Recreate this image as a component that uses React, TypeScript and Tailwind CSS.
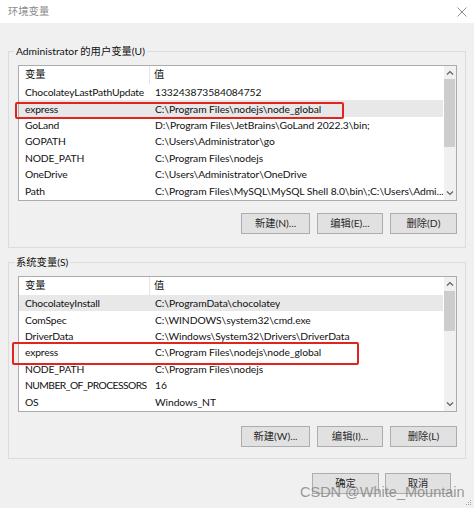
const FONT = 'Lato, "Noto Sans CJK SC", sans-serif';

type Row = [string, string];

const userVars: Row[] = [
  ['ChocolateyLastPathUpdate', '133243873584084752'],
  ['express', 'C:\\Program Files\\nodejs\\node_global'],
  ['GoLand', 'D:\\Program Files\\JetBrains\\GoLand 2022.3\\bin;'],
  ['GOPATH', 'C:\\Users\\Administrator\\go'],
  ['NODE_PATH', 'C:\\Program Files\\nodejs'],
  ['OneDrive', 'C:\\Users\\Administrator\\OneDrive'],
  ['Path', 'C:\\Program Files\\MySQL\\MySQL Shell 8.0\\bin\\;C:\\Users\\Admi...'],
];

const sysVars: Row[] = [
  ['ChocolateyInstall', 'C:\\ProgramData\\chocolatey'],
  ['ComSpec', 'C:\\WINDOWS\\system32\\cmd.exe'],
  ['DriverData', 'C:\\Windows\\System32\\Drivers\\DriverData'],
  ['express', 'C:\\Program Files\\nodejs\\node_global'],
  ['NODE_PATH', 'C:\\Program Files\\nodejs'],
  ['NUMBER_OF_PROCESSORS', '16'],
  ['OS', 'Windows_NT'],
];

function Chevron({ up }: { up?: boolean }) {
  return (
    <svg width="8" height="5" viewBox="0 0 8 5">
      <polyline
        points={up ? '1,4.5 4,1.5 7,4.5' : '1,0.5 4,3.5 7,0.5'}
        fill="none"
        stroke="#606060"
        strokeWidth="1.2"
      />
    </svg>
  );
}

interface VarListProps {
  rows: Row[];
  selected: number;
  thumbTop: number;
  thumbHeight: number;
  mark: { left: number; top: number; width: number; height: number };
}

function VarList({ rows, selected, thumbTop, thumbHeight, mark }: VarListProps) {
  return (
    <div className="relative flex h-[136px] w-[439px] border border-[#acacac] bg-white">
      {/* Columns */}
      <div className="flex w-[424px] shrink-0 flex-col overflow-hidden">
        <div className="flex h-[18px] items-center text-[10.3px] text-[#111]">
          <div className="flex h-full w-[131px] shrink-0 items-center border-r border-[#e5e5e5] pl-[6px]">变量</div>
          <div className="pl-[4px]">值</div>
        </div>
        {rows.map(([name, value], i) => (
          <div
            key={name}
            className={`flex h-[16.4px] items-center whitespace-nowrap text-[10.3px] leading-[16px] text-[#111] ${i === selected ? 'bg-[#e8e8e8]' : ''}`}
          >
            <div
              className={`w-[131px] shrink-0 overflow-hidden pl-[6px] ${name.length > 19 && name === name.toUpperCase() ? 'tracking-[-0.55px]' : 'tracking-[-0.15px]'}`}
            >
              {name}
            </div>
            <div className="min-w-0 overflow-hidden pl-[5px] tracking-[-0.06px]">{value}</div>
          </div>
        ))}
      </div>

      {/* Scrollbar */}
      <div className="relative ml-[1px] flex w-[12px] shrink-0 flex-col items-center justify-between bg-[#f0f0f0] py-[4px]">
        <Chevron up />
        <Chevron />
        <div
          className="absolute left-0 w-[11px] bg-[#cdcdcd]"
          style={{ top: thumbTop, height: thumbHeight }}
        />
      </div>

      {/* Red highlight */}
      <div
        className="absolute rounded-[2px] border-2 border-[#e3231d]"
        style={{ left: mark.left, top: mark.top, width: mark.width, height: mark.height }}
      />
    </div>
  );
}

function Button({ label, w = 'w-[67px]' }: { label: string; w?: string }) {
  return (
    <div
      className={`${w} flex h-[21px] items-center justify-center border border-[#adadad] bg-[#e1e1e1] text-[10.3px] text-[#2a2a2a]`}
    >
      {label}
    </div>
  );
}

export default function App() {
  return (
    <div className="relative h-[508px] w-[474px] overflow-hidden bg-[#f0f0f0]" style={{ fontFamily: FONT }}>
      {/* Title bar */}
      <div className="flex h-[23px] items-center justify-between bg-white pl-[8px] pr-[7px]">
        <span className="text-[10.3px] text-[#8c8c8c]">环境变量</span>
        <svg width="10" height="10" viewBox="0 0 10 10">
          <path d="M0.5 0.5 L9.5 9.5 M9.5 0.5 L0.5 9.5" stroke="#8c8c8c" strokeWidth="1" />
        </svg>
      </div>

      {/* User variables */}
      <fieldset className="mx-[8px] mt-[20px] border border-[#dcdcdc] pb-[13px] pl-[9px] pr-[8px] pt-[6px]">
        <legend className="-ml-[4px] px-[2px] text-[10.3px] leading-[16px] text-[#111]">
          Administrator 的用户变量(U)
        </legend>
        <VarList
          rows={userVars}
          selected={1}
          thumbTop={13}
          thumbHeight={68}
          mark={{ left: -4, top: 36, width: 329, height: 17 }}
        />
        <div className="mt-[12px] flex w-[439px] justify-end gap-[7px]">
          <Button label="新建(N)..." w="w-[69px]" />
          <Button label="编辑(E)..." w="w-[66px]" />
          <Button label="删除(D)" />
        </div>
      </fieldset>

      {/* System variables */}
      <fieldset className="mx-[8px] mt-[6px] border border-[#dcdcdc] pb-[11px] pl-[9px] pr-[8px] pt-[6px]">
        <legend className="-ml-[4px] px-[2px] text-[10.3px] leading-[16px] text-[#111]">系统变量(S)</legend>
        <VarList
          rows={sysVars}
          selected={0}
          thumbTop={14}
          thumbHeight={40}
          mark={{ left: -7, top: 65, width: 347, height: 23 }}
        />
        <div className="mt-[14px] flex w-[439px] justify-end gap-[7px]">
          <Button label="新建(W)..." w="w-[69px]" />
          <Button label="编辑(I)..." w="w-[66px]" />
          <Button label="删除(L)" />
        </div>
      </fieldset>

      {/* Dialog buttons */}
      <div className="mr-[23px] mt-[14px] flex justify-end gap-[6px]">
        <Button label="确定" w="w-[67px]" />
        <Button label="取消" w="w-[66px]" />
      </div>

      {/* Watermark */}
      <div
        className="absolute left-[300px] top-[484px] whitespace-nowrap text-[14.5px] leading-[17px] text-[rgba(135,135,135,0.85)]"
        style={{ fontFamily: '"Liberation Sans", Arial, sans-serif' }}
      >
        CSDN @White_Mountain
      </div>

      {/* Resize grip */}
      <svg className="absolute bottom-[2px] right-[2px]" width="8" height="8" viewBox="0 0 8 8">
        <rect x="6" y="2" width="1" height="1" fill="#a0a0a0" />
        <rect x="4" y="4" width="1" height="1" fill="#a0a0a0" />
        <rect x="6" y="4" width="1" height="1" fill="#a0a0a0" />
        <rect x="2" y="6" width="1" height="1" fill="#a0a0a0" />
        <rect x="4" y="6" width="1" height="1" fill="#a0a0a0" />
        <rect x="6" y="6" width="1" height="1" fill="#a0a0a0" />
      </svg>
    </div>
  );
}
